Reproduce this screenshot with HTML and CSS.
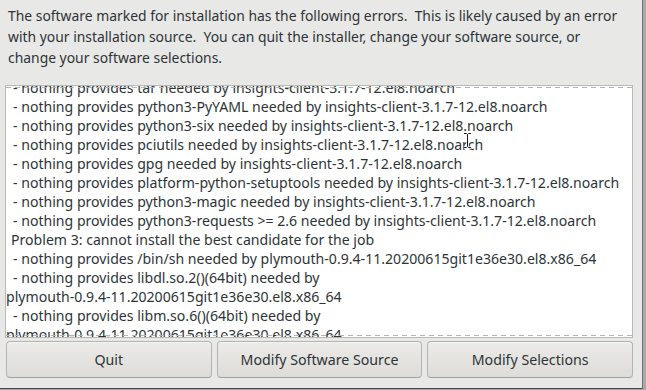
FILE: index.html
```html
<!DOCTYPE html>
<html lang="en">
<head>
  <meta charset="UTF-8">
  <title>Software errors</title>
  <link rel="stylesheet" href="styles.css">
</head>
<body>

  <div class="dialog">
    <p class="message">The software marked for installation has the following errors.  This is likely caused by an error<br>with your installation source.  You can quit the installer, change your software source, or<br>change your software selections.</p>

    <div class="error-view">
      <div class="error-lines">
        <div class="item">- nothing provides tar needed by insights-client-3.1.7-12.el8.noarch</div>
        <div class="item">- nothing provides python3-PyYAML needed by insights-client-3.1.7-12.el8.noarch</div>
        <div class="item">- nothing provides python3-six needed by insights-client-3.1.7-12.el8.noarch</div>
        <div class="item">- nothing provides pciutils needed by insights-client-3.1.7-12.el8.noarch</div>
        <div class="item">- nothing provides gpg needed by insights-client-3.1.7-12.el8.noarch</div>
        <div class="item">- nothing provides platform-python-setuptools needed by insights-client-3.1.7-12.el8.noarch</div>
        <div class="item">- nothing provides python3-magic needed by insights-client-3.1.7-12.el8.noarch</div>
        <div class="item">- nothing provides python3-requests &gt;= 2.6 needed by insights-client-3.1.7-12.el8.noarch</div>
        <div class="problem">Problem 3: cannot install the best candidate for the job</div>
        <div class="item">- nothing provides /bin/sh needed by plymouth-0.9.4-11.20200615git1e36e30.el8.x86_64</div>
        <div class="item">- nothing provides libdl.so.2()(64bit) needed by</div>
        <div class="wrap">plymouth-0.9.4-11.20200615git1e36e30.el8.x86_64</div>
        <div class="item">- nothing provides libm.so.6()(64bit) needed by</div>
        <div class="wrap">plymouth-0.9.4-11.20200615git1e36e30.el8.x86_64</div>
      </div>
      <div class="undershoot top"></div>
      <div class="undershoot bottom"></div>
      <svg class="ibeam" width="9" height="17" viewBox="0 0 9 17">
        <path d="M1 1.5h2.5l1 1 1-1H8M4.5 2.5v12M1 15.5h2.5l1-1 1 1H8" fill="none" stroke="#fff" stroke-width="2.4"/>
        <path d="M1 1.5h2.5l1 1 1-1H8M4.5 2.5v12M1 15.5h2.5l1-1 1 1H8" fill="none" stroke="#1a1a1a" stroke-width="1"/>
      </svg>
    </div>

    <div class="actions">
      <button>Quit</button>
      <button>Modify Software Source</button>
      <button>Modify Selections</button>
    </div>
  </div>

</body>
</html>
```

FILE: styles.css
```css
* {
  margin: 0;
  padding: 0;
  box-sizing: border-box;
}

body {
  background: #a9a9a9;
  font-family: "Noto Sans", "Liberation Sans", sans-serif;
  color: #2e3436;
}

.dialog {
  width: 643px;
  height: 389px;
  background: #e8e8e7;
  border-right: 1px solid #727272;
  border-bottom: 1px solid #4a4a4a;
  padding: 5px 9px 0 5px;
  display: flex;
  flex-direction: column;
}

.message {
  font-size: 13.9px;
  line-height: 21px;
  padding-left: 3px;
  white-space: pre;
}

.error-view {
  position: relative;
  margin-top: 17px;
  height: 253px;
  flex-shrink: 0;
  background: #fff;
  border: 1px solid #b9b9b6;
  overflow: hidden;
}

.error-lines {
  margin-top: -8px;
  font-size: 14.1px;
  line-height: 19px;
  color: #2e3436;
}

.error-lines div {
  white-space: pre;
}

.error-lines .item {
  padding-left: 7px;
}

.error-lines .problem {
  padding-left: 5px;
}

.undershoot {
  position: absolute;
  left: 0;
  right: 0;
  height: 1px;
  background: repeating-linear-gradient(90deg, #b4b4b4 0 5px, transparent 5px 9px);
}

.undershoot.top {
  top: 1px;
}

.undershoot.bottom {
  bottom: 1px;
}

.ibeam {
  position: absolute;
  left: 457px;
  top: 46px;
}

.actions {
  display: flex;
  gap: 5px;
  margin: 3px 0 0 1px;
}

.actions button {
  flex: 1;
  height: 37px;
  font-family: inherit;
  font-size: 14.2px;
  color: #2e3436;
  background: linear-gradient(#edebe9, #dedcd8);
  border: 1px solid #b3b3af;
  border-bottom-color: #a2a29e;
  border-radius: 4px;
  box-shadow: inset 0 1px #f6f5f4;
}
```
